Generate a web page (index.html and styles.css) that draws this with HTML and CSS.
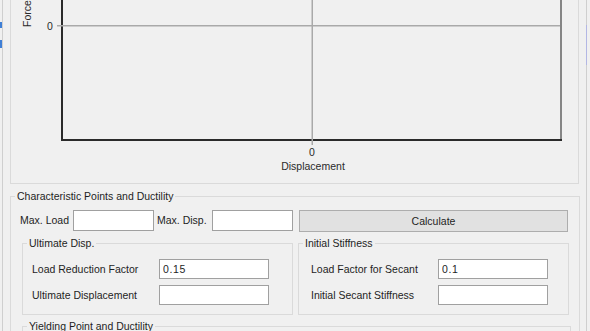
FILE: index.html
```html
<!DOCTYPE html>
<html lang="en">
<head>
    <meta charset="UTF-8">
    <title>Characteristic Points</title>
    <link rel="stylesheet" href="styles.css">
</head>
<body>

<div class="window">
    <div class="edge-left">
        <div class="edge-marks">
            <span class="mark mark-a"></span>
            <span class="mark mark-b"></span>
        </div>
        <div class="edge-line"></div>
    </div>

    <div class="main">
        <!-- chart group (top is scrolled out of view) -->
        <div class="chart-box">
            <svg class="chart" width="567" height="183" viewBox="0 0 567 183">
                <rect x="50" y="0" width="2" height="141" fill="#2a2a2a"/>
                <rect x="549" y="0" width="2" height="141" fill="#858585"/>
                <rect x="50" y="139" width="501" height="2" fill="#2a2a2a"/>
                <rect x="46" y="25" width="503" height="1.5" fill="#a9a9a9"/>
                <rect x="300.5" y="0" width="1.5" height="145" fill="#a9a9a9"/>
                <text class="tick" x="39" y="30" text-anchor="middle">0</text>
                <text class="tick" x="301" y="156" text-anchor="middle">0</text>
                <text class="tick" x="302" y="170" text-anchor="middle">Displacement</text>
                <text class="tick" transform="translate(20,27) rotate(-90)">Force</text>
            </svg>
        </div>

        <fieldset class="panel">
            <legend>Characteristic Points and Ductility</legend>
            <div class="top-row">
                <label class="lbl-load">Max. Load</label>
                <input class="box" type="text">
                <label class="lbl-disp">Max. Disp.</label>
                <input class="box" type="text">
                <button class="btn" type="button">Calculate</button>
            </div>

            <div class="sub-grid">
                <fieldset class="sub sub-left">
                    <legend>Ultimate Disp.</legend>
                    <div class="field">
                        <label>Load Reduction Factor</label>
                        <input class="box wide" type="text" value="0.15">
                    </div>
                    <div class="field">
                        <label>Ultimate Displacement</label>
                        <input class="box wide" type="text">
                    </div>
                </fieldset>
                <fieldset class="sub sub-right">
                    <legend>Initial Stiffness</legend>
                    <div class="field">
                        <label>Load Factor for Secant</label>
                        <input class="box wide" type="text" value="0.1">
                    </div>
                    <div class="field">
                        <label>Initial Secant Stiffness</label>
                        <input class="box wide" type="text">
                    </div>
                </fieldset>
            </div>

            <fieldset class="sub yield">
                <legend>Yielding Point and Ductility</legend>
            </fieldset>
        </fieldset>
    </div>

    <div class="edge-right">
        <div class="edge-line edge-line-r"></div>
    </div>
</div>

</body>
</html>
```

FILE: styles.css
```css
body {
    margin: 0;
    background-color: #f0f0f0;
    font-family: "Liberation Sans", Arial, sans-serif;
    font-size: 10.5px;
    color: #1e1e1e;
    width: 590px;
    height: 331px;
    overflow: hidden;
}
.window {
    display: flex;
    height: 331px;
    overflow: hidden;
}

/* window edges */
.edge-left {
    width: 10px;
    flex: none;
    display: flex;
}
.edge-marks {
    width: 2px;
    display: flex;
    flex-direction: column;
}
.mark {
    display: block;
    width: 2px;
    background-color: #3f7fd6;
}
.mark-a {
    height: 6px;
    margin-top: 22px;
}
.mark-b {
    height: 8px;
    margin-top: 12px;
}
.edge-line {
    width: 1px;
    height: 100%;
    background-color: #cfcfcf;
}
.edge-right {
    width: 10px;
    flex: none;
    display: flex;
    justify-content: flex-end;
    padding-right: 3px;
    box-sizing: border-box;
}
.edge-line-r {
    background: linear-gradient(#cfcfcf 25px, #b3b7e4 25px, #b3b7e4 65px, #cfcfcf 65px);
}

.main {
    width: 570px;
    height: 331px;
    flex: none;
    overflow: hidden;
}

/* chart */
.chart-box {
    height: 183px;
    border: 1px solid #dadada;
    border-top: none;
    margin-right: 1px;
}
.chart {
    display: block;
}
.tick {
    font-family: "Liberation Sans", Arial, sans-serif;
    font-size: 10.5px;
    fill: #2a2a2a;
}

/* group boxes */
fieldset {
    margin: 0;
    border: 1px solid #dadada;
    min-width: 0;
}
legend {
    padding: 0 2px;
    line-height: 12px;
    height: 12px;
}
.panel {
    margin-top: 6px;
    padding: 8px 11px 0 11px;
    border-bottom: none;
    box-sizing: border-box;
    height: 141px;
    overflow: hidden;
}
.panel > legend {
    margin-left: -7px;
}
.top-row {
    display: flex;
    height: 22px;
    margin-left: -2px;
}
.top-row label {
    line-height: 21px;
}
.lbl-load {
    width: 53px;
}
.lbl-disp {
    width: 55px;
    padding-left: 3px;
}
.box {
    width: 81px;
    height: 21px;
    box-sizing: border-box;
    border: 1px solid #a0a0a0;
    background-color: white;
    padding: 0 3px;
    font-family: "Liberation Sans", Arial, sans-serif;
    font-size: 10.5px;
    letter-spacing: 0.6px;
    color: #1e1e1e;
    outline: none;
}
.btn {
    flex: 1;
    margin-left: 6px;
    height: 22px;
    background-color: #e1e1e1;
    border: 1px solid #adadad;
    font-family: "Liberation Sans", Arial, sans-serif;
    font-size: 10.5px;
    color: #1e1e1e;
    padding: 0;
}

.sub-grid {
    display: grid;
    grid-template-columns: 271px 271px;
    column-gap: 5px;
    margin-top: 5px;
}
.sub {
    padding: 10px 0 9px 9px;
}
.sub > legend {
    margin-left: -5px;
}
.sub-right {
    padding-left: 12px;
}
.sub-right > legend {
    margin-left: -8px;
}
.field {
    display: flex;
    align-items: center;
    height: 20px;
}
.field + .field {
    margin-top: 6px;
}
.field label {
    width: 127px;
}
.wide {
    width: 110px;
    height: 20px;
}

.yield {
    margin-top: 5px;
    margin-right: -3px;
    padding: 0 0 0 9px;
    border-bottom: none;
}
.yield > legend {
    margin-left: -5px;
}
```
